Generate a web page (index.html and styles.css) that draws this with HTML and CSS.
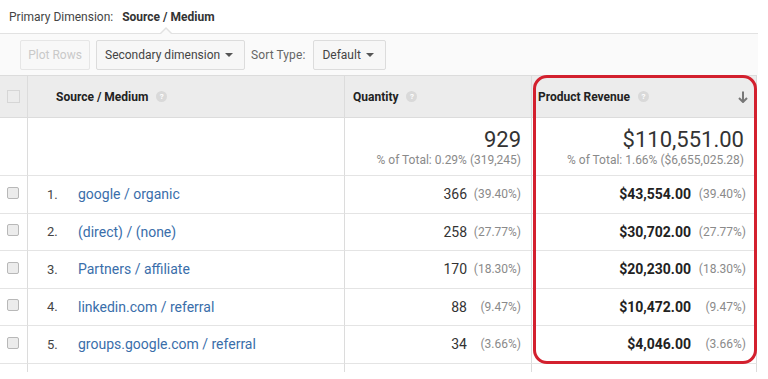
FILE: index.html
```html
<!DOCTYPE html>
<html>
<head>
<meta charset="utf-8">
<link rel="stylesheet" href="styles.css">
</head>
<body>
<div class="page">
  <div class="primary">Primary Dimension: <b>Source / Medium</b></div>
  <div class="toolbar">
    <button class="btn plot">Plot Rows</button>
    <button class="btn secondary">Secondary dimension <span class="caret"></span></button>
    <span class="sort-label">Sort Type:</span>
    <button class="btn sort">Default <span class="caret"></span></button>
  </div>
  <div class="table">
    <div class="row head">
      <div class="c chk"><span class="hbox"></span></div>
      <div class="c src">Source / Medium <span class="help">?</span></div>
      <div class="c qty">Quantity <span class="help">?</span></div>
      <div class="c rev">Product Revenue <span class="help">?</span>
        <svg class="sortarrow" width="10" height="12" viewBox="0 0 10 12"><path d="M5 0.5V11M1 7l4 4 4-4" fill="none" stroke="#777" stroke-width="2"/></svg>
      </div>
    </div>
    <div class="row totals">
      <div class="c chk"></div>
      <div class="c src"></div>
      <div class="c qty"><div class="big">929</div><div class="of">% of Total: 0.29% (319,245)</div></div>
      <div class="c rev"><div class="big">$110,551.00</div><div class="of">% of Total: 1.66% ($6,655,025.28)</div></div>
    </div>
    <div class="row data">
      <div class="c chk"><span class="box"></span></div>
      <div class="c src"><span class="num">1.</span><a>google / organic</a></div>
      <div class="c qty"><span class="val">366</span><span class="pct">(39.40%)</span></div>
      <div class="c rev"><span class="val">$43,554.00</span><span class="pct">(39.40%)</span></div>
    </div>
    <div class="row data">
      <div class="c chk"><span class="box"></span></div>
      <div class="c src"><span class="num">2.</span><a>(direct) / (none)</a></div>
      <div class="c qty"><span class="val">258</span><span class="pct">(27.77%)</span></div>
      <div class="c rev"><span class="val">$30,702.00</span><span class="pct">(27.77%)</span></div>
    </div>
    <div class="row data">
      <div class="c chk"><span class="box"></span></div>
      <div class="c src"><span class="num">3.</span><a>Partners / affiliate</a></div>
      <div class="c qty"><span class="val">170</span><span class="pct">(18.30%)</span></div>
      <div class="c rev"><span class="val">$20,230.00</span><span class="pct">(18.30%)</span></div>
    </div>
    <div class="row data">
      <div class="c chk"><span class="box"></span></div>
      <div class="c src"><span class="num">4.</span><a>linkedin.com / referral</a></div>
      <div class="c qty"><span class="val">88</span><span class="pct">(9.47%)</span></div>
      <div class="c rev"><span class="val">$10,472.00</span><span class="pct">(9.47%)</span></div>
    </div>
    <div class="row data">
      <div class="c chk"><span class="box"></span></div>
      <div class="c src"><span class="num">5.</span><a>groups.google.com / referral</a></div>
      <div class="c qty"><span class="val">34</span><span class="pct">(3.66%)</span></div>
      <div class="c rev"><span class="val">$4,046.00</span><span class="pct">(3.66%)</span></div>
    </div>
    <div class="row tail">
      <div class="c chk"></div>
      <div class="c src"></div>
      <div class="c qty"></div>
      <div class="c rev"></div>
    </div>
    <div class="highlight"></div>
  </div>
</div>
</body>
</html>
```

FILE: styles.css
```css
* { box-sizing: border-box; }
html, body { margin: 0; padding: 0; background: #fff; }
body { font-family: Roboto, "Liberation Sans", Arial, sans-serif; color: #333; }

.page { width: 768px; }

.primary {
  height: 33px;
  padding: 10px 0 0 9px;
  font-size: 12px;
  line-height: 14px;
  color: #444;
}
.primary b { color: #333; margin-left: 6px; }

.toolbar {
  position: relative;
  width: 758px;
  height: 42px;
  border-top: 1px solid #e2e2e2;
  background: #fafafa;
  display: flex;
  align-items: center;
  padding: 0 0 0 20px;
  gap: 6px;
}
.toolbar::before,
.toolbar::after {
  content: "";
  position: absolute;
  left: 160px;
  top: -7px;
  border: 6px solid transparent;
  border-bottom-color: #e2e2e2;
  border-top: 0;
  border-bottom-width: 6px;
}
.toolbar::after {
  top: -5px;
  left: 161px;
  border-width: 0 5px 5px 5px;
  border-bottom-color: #fafafa;
}

.btn {
  height: 30px;
  font-family: inherit;
  font-size: 12px;
  color: #444;
  background: #f7f7f7;
  border: 1px solid #dcdcdc;
  border-radius: 2px;
  padding: 0 8px;
  display: inline-flex;
  align-items: center;
  justify-content: space-between;
}
.btn.plot { width: 70px; color: #c9c9c9; justify-content: center; padding: 0; background: #f8f8f8; border-color: #e6e6e6; }
.btn.secondary { width: 149px; }
.btn.sort { width: 73px; margin-left: 2px; }
.caret {
  width: 0; height: 0;
  border-left: 4px solid transparent;
  border-right: 4px solid transparent;
  border-top: 4px solid #555;
  margin-right: 3px;
}
.sort-label { font-size: 12px; color: #666; letter-spacing: 0.1px; }

.table {
  position: relative;
  width: 757px;
  border-top: 1px solid #dcdcdc;
}
.row {
  display: grid;
  grid-template-columns: 28px 317px 187px 225px;
}
.c {
  border-right: 1px solid #dcdcdc;
  border-bottom: 1px solid #e4e4e4;
  display: flex;
  align-items: center;
}
.c.chk { justify-content: flex-start; padding-left: 7px; }

.head { height: 42px; background: #ececec; }
.head .c { border-bottom-color: #dcdcdc; font-size: 12px; font-weight: 700; color: #222; }
.head .src { padding-left: 28px; }
.head .qty { padding-left: 8px; }
.head .rev { padding-left: 6px; position: relative; }
.hbox { width: 13px; height: 13px; border: 1px solid #d6d6d6; background: #ececec; }
.help {
  display: inline-flex;
  align-items: center;
  justify-content: center;
  width: 11px; height: 11px;
  border-radius: 50%;
  background: #d9d9d9;
  color: #fff;
  font-size: 8px;
  font-weight: 700;
  margin-left: 8px;
}
.sortarrow { position: absolute; right: 8px; top: 15px; }

.totals { height: 58px; }
.totals .c { flex-direction: column; align-items: flex-end; justify-content: center; padding-right: 10px; padding-top: 2px; }
.totals .chk, .totals .src { padding: 0; }
.totals .rev { padding-right: 12px; }
.big { font-size: 22px; line-height: 24px; color: #333; }
.of { font-size: 12px; line-height: 14px; color: #8a8a8a; margin-top: 1px; }

.data { height: 37.5px; }
.box {
  width: 12px; height: 12px;
  border: 1px solid #b8b8b8;
  border-radius: 2px;
  background: #ececec;
  margin-top: -3px;
}
.data .src { padding-left: 19px; font-size: 14px; }
.num { width: 31px; color: #444; font-size: 13px; }
.data a { color: #3a6eaa; }
.data .qty, .data .rev { justify-content: flex-end; font-size: 14px; color: #333; }
.data .qty { padding-right: 10px; }
.data .rev { padding-right: 10px; }
.data .rev .val { font-weight: 700; color: #222; }
.pct { width: 54px; text-align: right; font-size: 12px; color: #8a8a8a; }
.data .rev .pct { width: 55px; }

.tail { height: 8px; }
.tail .c { border-bottom: 0; }

.highlight {
  position: absolute;
  left: 533px;
  top: -1px;
  width: 224px;
  height: 289px;
  border: 3px solid #d3202e;
  border-radius: 14px;
  pointer-events: none;
}
```
